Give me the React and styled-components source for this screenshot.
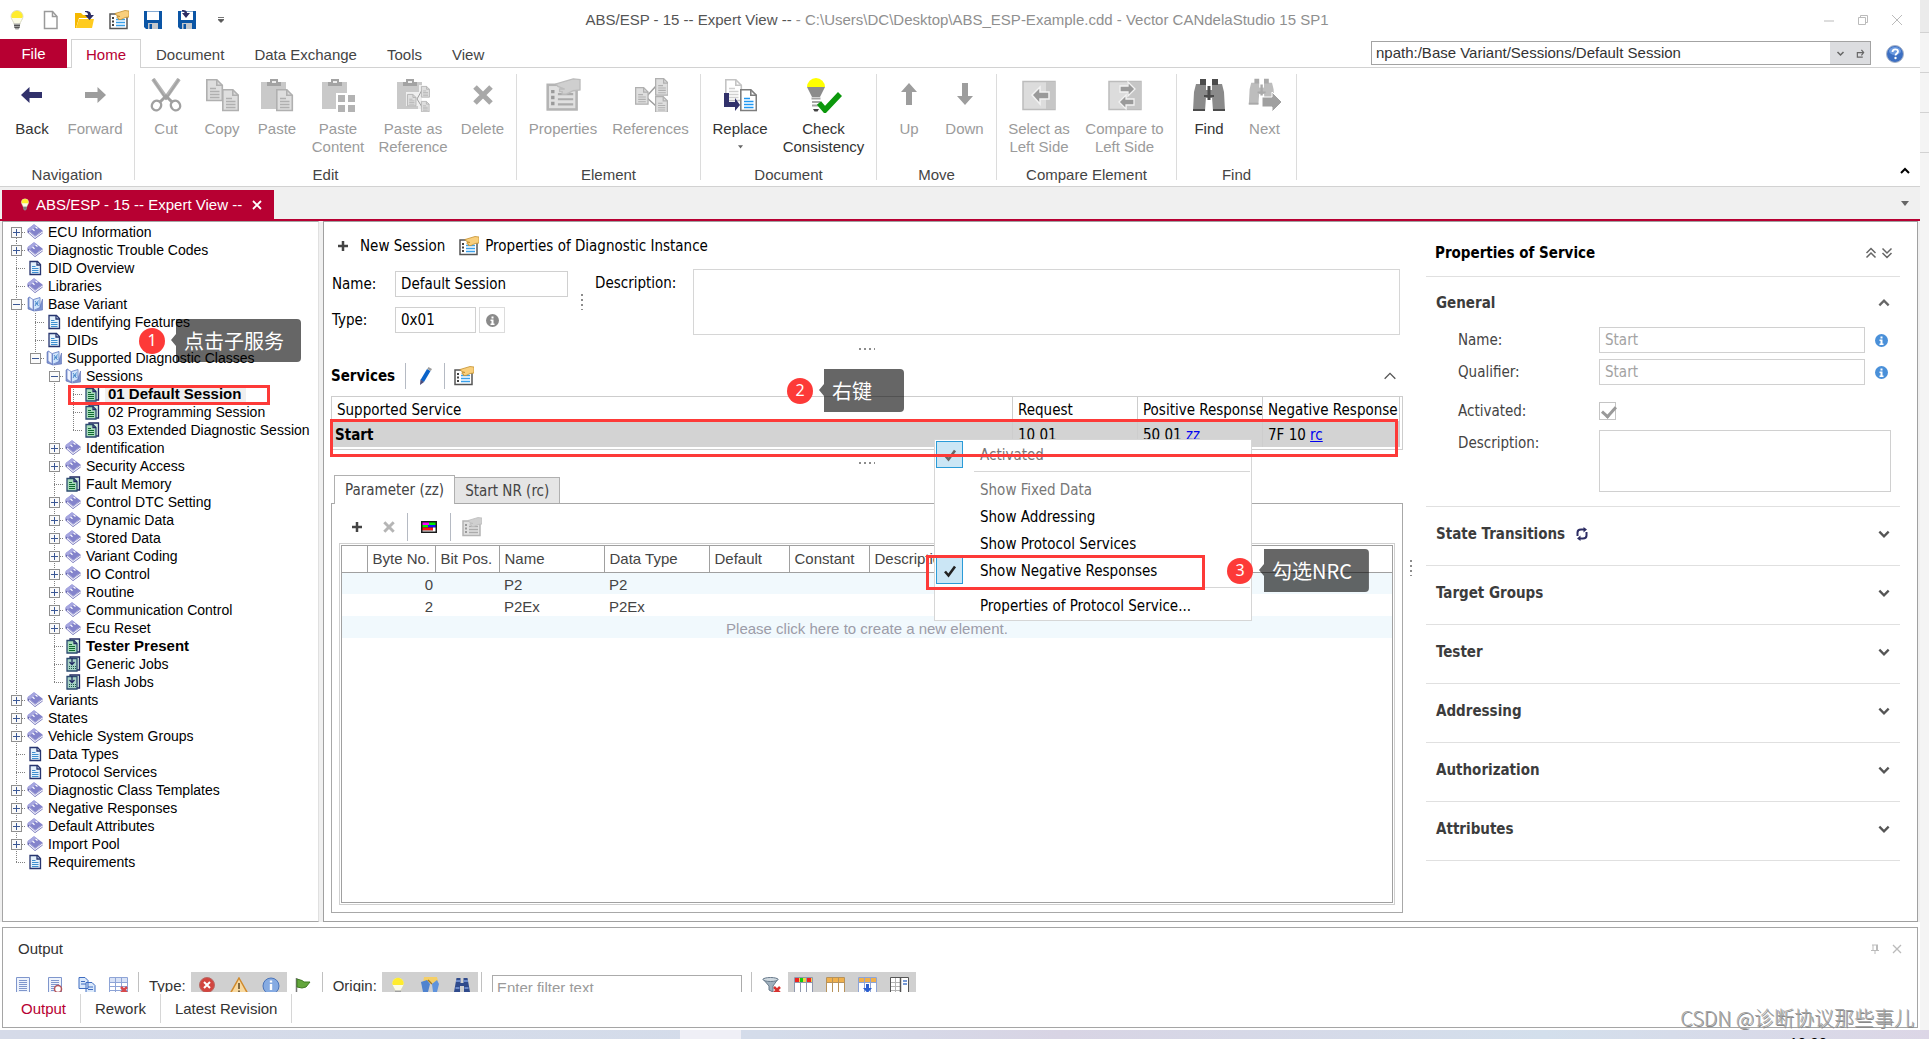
import { useState } from 'react'
import styled, { createGlobalStyle, css } from 'styled-components'

const UI_FONT = `'Liberation Sans', Arial, sans-serif`
const FORM_FONT = `'DejaVu Sans Condensed', 'Noto Sans', sans-serif`
const CJK_FONT = `'Noto Sans CJK SC', sans-serif`

/* ---------- icons ---------- */

const Svg = ({ w = 16, h = w, box, children }) => (
  <svg width={w} height={h} viewBox={box || `0 0 ${w} ${h}`} aria-hidden="true">
    {children}
  </svg>
)

const Bulb = ({ w = 20, h = 20 }) => (
  <Svg w={w} h={h} box="0 0 20 20">
    <path d="M4 6.500a6 6 0 0 1 12 0c0 3-3 5-3 8H7c0-3-3-5-3-8z" fill="#fbfbe6" stroke="#cfcfba" strokeWidth=".8" />
    <path d="M4.300 6.500a5.700 5.700 0 0 1 11.400 0l-.700 1.500H5z" fill="#ffec2e" />
    <path d="M7 13.500h6v3.500l-1.500 2.500h-3L7 17z" fill="#a0a0a0" />
    <path d="M7 15.500h6M7.500 17.500h5" stroke="#555" />
  </Svg>
)

const NewFile = () => (
  <Svg w={20}>
    <path d="M3.500 1.500h8l4.500 5v12H3.500z" fill="#fff" stroke="#9a9a9a" strokeWidth="1.500" />
    <path d="M11.500 1.500v5H16" fill="none" stroke="#9a9a9a" strokeWidth="1.500" />
  </Svg>
)

const OpenFile = () => (
  <Svg w={20}>
    <path d="M0 3h6l2 2h6v3H4L1 18H0z" fill="#f5b800" />
    <path d="M4 9h15l-2 9H1z" fill="#ffcb1f" />
    <path d="M10 1c5-.500 6 2 6 4h3l-4.500 5L10 5h3c0-2-1-3-3-3z" fill="#2c2c63" />
  </Svg>
)

const Props = ({ w = 20, h = 20, gray }) => (
  <Svg w={w} h={h} box="0 0 20 20">
    <rect x="1" y="4" width="17" height="14.500" fill={gray ? '#e0e0e0' : '#fff'} stroke={gray ? '#b4b4b4' : '#555'} strokeWidth="1.500" />
    <path d="M3 8h2M3 11.500h2M3 15h2" stroke={gray ? '#9a9a9a' : '#444'} strokeWidth="2" />
    <path d="M7 9.500h9M7 12.500h9M7 15.500h9" stroke={gray ? '#ababab' : '#39a0ea'} strokeWidth="1.300" />
    <path d="M6 3.500l5-1.500 5-1.500 4 .500v6l-4 .500-4 2H9.500V8H8V6.500h3L7 5z" fill={gray ? '#cfcfcf' : '#f9cf7c'} stroke={gray ? '#bcbcbc' : '#c4912f'} strokeWidth=".8" />
  </Svg>
)

const Save = ({ arrow }) => (
  <Svg w={20}>
    <path d="M1 1h18v18H3l-2-2z" fill="#0b55a5" />
    <rect x="4" y="1.500" width="12" height="8.500" fill="#fff" />
    <rect x="5" y="13" width="10" height="6" fill="#c4c7cb" />
    <rect x="6.500" y="14" width="2.500" height="5" fill="#0b55a5" />
    {arrow && <path d="M5 0c4 0 5 1 5 3h3L9 8 5 3h2.500c0-1-1-1.500-2.500-1.500z" fill="#2c2c63" />}
  </Svg>
)

const arrows = {
  left: 'M6 17l8.500-8v5H27v6H14.500v5z',
  right: 'M28 17l-8.500-8v5H7v6h12.500v5z',
  up: 'M17 5l8 9h-5v13h-6V14H9z',
  down: 'M17 27l8-9h-5V5h-6v13H9z',
}
const Arrow = ({ dir, color = '#9d9d9d' }) => (
  <Svg w={34}>
    <path d={arrows[dir]} fill={color} />
  </Svg>
)

const Cut = () => (
  <Svg w={34}>
    <path d="M4 1l14 20M30 1L16 21" stroke="#b5b5b5" strokeWidth="4" />
    <path d="M4 1l13 20M30 1L17 21" stroke="#a2a2a2" strokeWidth="1.500" />
    <ellipse cx="7.500" cy="27.500" rx="4.500" ry="5" transform="rotate(30 7.500 27.500)" fill="none" stroke="#a0a0a0" strokeWidth="2.400" />
    <ellipse cx="26.500" cy="27.500" rx="4.500" ry="5" transform="rotate(-30 26.500 27.500)" fill="none" stroke="#a0a0a0" strokeWidth="2.400" />
    <path d="M11 24l6-6 6 6" fill="none" stroke="#a0a0a0" strokeWidth="3" />
  </Svg>
)

const Page = ({ x, y, s = 1, fill = '#dedede', line = '#b0b0b0', text = '#b0b0b0' }) => (
  <g transform={`translate(${x} ${y}) scale(${s})`}>
    <path d="M.8.8h10l5.500 5.500V21.500H.8z" fill={fill} stroke={line} strokeWidth="1.600" />
    <path d="M10.800.8v5.500h5.500" fill="none" stroke={line} strokeWidth="1.600" />
    <path d="M4 9.500h6M4 12.500h9.500M4 15.500h9.500M4 18.500h9.500" stroke={text} strokeWidth="1.400" />
  </g>
)

const Copy = () => (
  <Svg w={34}>
    <Page x={1} y={1} />
    <Page x={17} y={11} />
  </Svg>
)

const Clip = () => (
  <>
    <path d="M1 4h25v27H1z" fill="#c9c9c9" />
    <path d="M7 8V4h3V1h8v3h3v4z" fill="#a3a3a3" />
    <path d="M12 3h4v2h-4z" fill="#eee" />
  </>
)
const Paste = () => (
  <Svg w={34}>
    <Clip />
    <Page x={16} y={11} />
  </Svg>
)
const PasteContent = () => (
  <Svg w={34}>
    <Clip />
    <path d="M15 15h19v19H15z" fill="#fff" />
    <path d="M17 17h7v7h-7zM27 17h7v7h-7zM17 27h7v7h-7zM27 27h7v7h-7z" fill="#b3b3b3" />
  </Svg>
)
const PasteRef = () => (
  <Svg w={34}>
    <Clip />
    <path d="M10 14h13V7h11v27H22v-6H10z" fill="#fff" opacity=".7" />
    <path d="M21 21l5-9M21 21l5 8" stroke="#9d9d9d" />
    <Page x={11} y={16} s={0.55} />
    <Page x={25} y={8} s={0.52} />
    <Page x={25} y={23} s={0.5} />
  </Svg>
)
const Refs = () => (
  <Svg w={34}>
    <path d="M12 19L22 8M12 19l10 9" stroke="#9d9d9d" strokeWidth="1.500" />
    <Page x={1} y={9} s={0.8} />
    <Page x={21} y={0} s={0.8} />
    <Page x={21} y={18} s={0.76} />
  </Svg>
)
const Cross = ({ w = 34, color = '#a8a8a8' }) => (
  <Svg w={w} box="0 0 34 34">
    <path d="M9 9l16 16M25 9L9 25" stroke={color} strokeWidth="5" />
  </Svg>
)
const Replace = () => (
  <Svg w={34}>
    <Page x={2} y={1} fill="#fff" line="#c4c4c4" text="#d0d0d0" />
    <Page x={17} y={11} fill="#fff" line="#7d7d7d" text="#1f97f2" />
    <path d="M1 15h5v9h6v-4l5 7-5 6v-4H1z" fill="#31316b" />
  </Svg>
)
const Check = () => (
  <Svg w={36} h={36}>
    <path d="M1 10a9 9 0 0 1 18 0z" fill="#ffff00" />
    <path d="M1 10h18l-5 10H6z" fill="#8c8c8c" />
    <path d="M5.500 21.500h9M6 25h8.500M6 28.500h8" stroke="#a5a5a5" strokeWidth="2" />
    <path d="M7 32h6l-1.500 2.500h-3z" fill="#444" />
    <path d="M13 26l6 7L34 17" fill="none" stroke="#0c980c" strokeWidth="5.500" />
  </Svg>
)
const LeftSide = () => (
  <Svg w={34}>
    <path d="M1 3.500h32v28H1z" fill="#dcdcdc" stroke="#bcbcbc" strokeWidth="1.500" />
    <path d="M24 4h9v27h-9z" fill="#c6c6c6" />
    <path d="M10 17l8-8v5h9v7h-9v5z" fill="#9a9a9a" stroke="#f2f2f2" strokeWidth="1.500" />
  </Svg>
)
const Compare = () => (
  <Svg w={34}>
    <path d="M1 3.500h32v28H1z" fill="#dcdcdc" stroke="#bcbcbc" strokeWidth="1.500" />
    <path d="M19 4h14v27H19z" fill="#c6c6c6" />
    <path d="M27 11l-7-7v4h-8v6h8v4zM11 24l7-7v4h8v6h-8v4z" fill="#9a9a9a" stroke="#f2f2f2" strokeWidth="1.300" />
  </Svg>
)
const Binoculars = ({ next }) => (
  <Svg w={34}>
    <g fill={next ? '#bdbdbd' : '#8a8a8a'} transform={next ? 'scale(.8)' : undefined}>
      <path d="M4 6h10v13l-1 14H1L2 14zM20 6h10l2 8 1 19H21l-1-14z" />
      <path d="M13 12h8v8h-8z" />
      <path d="M8 1h6v6H8zM20 1h6v6h-6zM1 31h12v2H1zM21 31h12v2H21zM15.500 8h3v14h-3zM12 17h10v2H12z" fill={next ? '#a9a9a9' : '#4b4b4b'} />
    </g>
    {next && <path d="M14 19h10v-5l10 10-10 10v-5H14z" fill="#a0a0a0" stroke="#fff" />}
  </Svg>
)

const Chevron = ({ down, w = 12, weight = 2, color = '#555' }) => (
  <Svg w={w} box="0 0 12 12">
    <path d={down ? 'M2 4l4 4 4-4' : 'M2 8l4-4 4 4'} fill="none" stroke={color} strokeWidth={weight} />
  </Svg>
)
const DoubleChevron = ({ down }) => (
  <Svg w={12}>
    <path d={down ? 'M1.500 1.500L6 6l4.500-4.500M1.500 6L6 10.500 10.500 6' : 'M1.500 6L6 1.500 10.500 6M1.500 10.500L6 6l4.500 4.500'} fill="none" stroke="#666" strokeWidth="1.500" />
  </Svg>
)
const Triangle = ({ w = 8, color = '#666' }) => (
  <Svg w={w} box="0 0 8 8">
    <path d="M0 2h8L4 7z" fill={color} />
  </Svg>
)
const Info = ({ w = 13, color = '#4a90d9' }) => (
  <Svg w={w} box="0 0 13 13">
    <circle cx="6.500" cy="6.500" r="6.500" fill={color} />
    <path d="M5.500 2.500h2v2h-2zM4.500 5.500h3v4h1V11h-4V9.500h1v-2.500h-1z" fill="#fff" />
  </Svg>
)
const Help = () => (
  <Svg w={18}>
    <circle cx="9" cy="9" r="8.500" fill="#3c6fc2" stroke="#a9b4c8" />
    <ellipse cx="9" cy="6" rx="6" ry="4" fill="#6d9be0" />
    <path d="M6.500 7c0-3.500 5.500-3.500 5.500-.500 0 2-2.500 2-2.500 4" fill="none" stroke="#fff" strokeWidth="1.800" />
    <circle cx="9.500" cy="13" r="1.200" fill="#fff" />
  </Svg>
)
const Plus = () => (
  <Svg w={12}>
    <path d="M6 1v10M1 6h10" stroke="#444" strokeWidth="2.500" />
  </Svg>
)
const Pencil = () => (
  <Svg w={18} h={20}>
    <path d="M11 3l3.500 2L8 16l-3.500-2z" fill="#0a63c9" />
    <path d="M12.500 1l3.500 2-1.200 2-3.500-2z" fill="#9c9c9c" />
    <path d="M4.500 13.500L8 16l-4 3z" fill="#4a4a7a" />
  </Svg>
)
const Blocks = () => (
  <Svg w={16} h={12}>
    <path d="M0 0h16v12H0z" fill="#1a1a1a" />
    <path d="M1.500 1.500H8V4H1.500z" fill="#f0f" />
    <path d="M8 1.500h6.500V4H8zM1.500 4H7v2.500H1.500z" fill="#0e0" />
    <path d="M7 4h7.500v2.500H7z" fill="#11f" />
    <path d="M1.500 6.500H12V9.500H1.500z" fill="#f11" />
    <path d="M12 6.500h2.500v4H12zM1.500 9.500H12v1H1.500z" fill="#fff" />
  </Svg>
)
const Tick = ({ color }) => (
  <Svg w={14}>
    <path d="M2 7.500l3.500 4L12 2.500" fill="none" stroke={color} strokeWidth="2.600" />
  </Svg>
)
const Cycle = () => (
  <Svg w={14}>
    <path d="M2.500 9V5.500c0-2 1.500-3 3.500-3h3M11.500 5v3.500c0 2-1.500 3-3.500 3H5" fill="none" stroke="#2c2c63" strokeWidth="2" />
    <path d="M8.500 0l3.500 2.500-3.500 3zM5.500 8.500L2 11.500l3.500 2.500z" fill="#2c2c63" />
  </Svg>
)

const treeIcons = {
  book: (
    <Svg w={16}>
      <path d="M.500 5.500v3L8 15l7.500-5.500v-3L8 12.500z" fill="#6464b2" />
      <path d="M2 8.200l6 5.300 7.500-5.500" fill="none" stroke="#f1f1fb" strokeWidth="1.200" />
      <path d="M.500 5.200L7 .300 15.500 6.500 8 12.300z" fill="#8383cb" />
      <path d="M.500 5.200L7 .300l2.500 1.800L3 7.500z" fill="#a6a6e0" />
      <path d="M5.500 5l2 1.700M8.500 3l2 1.500" stroke="#fff" strokeWidth="1.200" />
    </Svg>
  ),
  open: (
    <Svg w={16}>
      <path d="M1 2l2-1v11l4 3-6-2zM15.500 3v11l-8 1 5-3z" fill="#7d93cf" stroke="#5d6fb5" strokeWidth=".6" />
      <path d="M2 1l4 2.500V14l-4-3z" fill="#f2f6ff" stroke="#7288c8" strokeWidth=".8" />
      <path d="M6.500 3.500L13 1.500v10l-6.500 3z" fill="#cfe4fb" stroke="#5a76c0" strokeWidth=".8" />
      <path d="M8 5l3.500 5M11.500 4.500L8 10M8 8l3.500-1" stroke="#3f82c6" strokeWidth=".9" />
    </Svg>
  ),
  page: (
    <Svg w={16}>
      <path d="M3 1.500h7.500l3 3v10H3z" fill="#e3f1fc" stroke="#27356f" strokeWidth="1.300" />
      <path d="M10 1.500v3.500h3.500" fill="none" stroke="#27356f" strokeWidth="1.300" />
      <path d="M5 6.500h3.500M5 8.500h6.500M5 10.500h6.500M5 12.500h6.500" stroke="#3f8fd0" />
    </Svg>
  ),
  green: (
    <Svg w={16}>
      <path d="M5 1h9.500v13H5z" fill="#d7efe2" stroke="#232a63" strokeWidth="1.300" />
      <path d="M2 2.500h7l3 3v9.500H2z" fill="#a8dcbb" stroke="#2b4a70" strokeWidth="1.300" />
      <path d="M9 2.500v3h3" fill="none" stroke="#232a63" strokeWidth="1.300" />
      <path d="M4 6.500h3M4 8.500h6M4 10.500h6M4 12.500h6" stroke="#0f6b30" />
    </Svg>
  ),
  job: (
    <Svg w={16}>
      <path d="M5 1h9.500v13H5z" fill="#d7efe2" stroke="#232a63" strokeWidth="1.300" />
      <path d="M2 2.500h10v12.500H2z" fill="#a8d3c6" stroke="#2b4a70" strokeWidth="1.300" />
      <path d="M7 2v6M4.500 6L7 8.500 9.500 6" fill="none" stroke="#232a63" strokeWidth="1.300" />
      <path d="M4 10.500h7M4 12.500h7" stroke="#1d5a4c" strokeDasharray="1 1" />
    </Svg>
  ),
}

/* ---------- output toolbar icons ---------- */

const ListIcon = ({ mark }) => (
  <Svg w={16}>
    <path d="M1.500.500h13v16h-13z" fill="#eef3fc" stroke="#7f96cc" />
    <path d="M4 3.500h8M4 5.500h8M4 7.500h8M4 9.500h8M4 11.500h8M4 13.500h8" stroke="#7f96cc" />
    {mark && <circle cx="11" cy="12" r="3.500" fill="#fff" stroke="#b4555c" strokeWidth="1.500" />}
  </Svg>
)
const CopyIcon = () => (
  <Svg w={18} h={16}>
    <path d="M1 .500h6l3 3v8H1zM8 5.500h6l3 3V16H8z" fill="#dbe9fb" stroke="#3f6cc0" />
    <path d="M3 4.500h4M3 7h5M10 10h5M10 12.500h5" stroke="#3f6cc0" />
  </Svg>
)
const GridIcon = ({ head = '#d8e2f6', line = '#8ea4d6', mark }) => (
  <Svg w={20} h={18}>
    <path d="M.500.500h18v17H.500z" fill="#fff" stroke={line} />
    <path d="M1 1h17v4H1z" fill={head} />
    <path d="M.500 5.500h18M6.500 1v16M12.500 1v16" stroke={line} />
    {mark === 'x' && <path d="M.500 9.500h18M.500 13.500h18" stroke={line} />}
    {mark === 'x' && <path d="M12 10l6 6M18 10l-6 6" stroke="#d8484a" strokeWidth="2.500" />}
    {mark === 'colors' && <path d="M1 3h4M13 3h4" stroke="#e22" strokeWidth="4" />}
    {mark === 'colors' && <path d="M6 3h3" stroke="#1c1" strokeWidth="4" />}
    {mark === 'down' && <path d="M8 7h3v4h3l-4.500 5L5 11h3z" fill="#2b5fd0" />}
  </Svg>
)
const SplitIcon = () => (
  <Svg w={20} h={18}>
    <path d="M.500.500h18v17H.500z" fill="#fff" stroke="#555" />
    <path d="M1 5.500h9M1 9.500h9M1 13.500h9M5.500 1v16" stroke="#b5b5b5" />
    <path d="M10.500.500v17" stroke="#555" strokeWidth="1.500" />
    <path d="M13 4h4M13 7h4" stroke="#4a78c8" strokeWidth="1.500" />
  </Svg>
)
const ErrorIcon = () => (
  <Svg w={16}>
    <circle cx="8" cy="8" r="7.500" fill="#d2453f" stroke="#b86a66" />
    <path d="M5 5l6 6M11 5l-6 6" stroke="#fff" strokeWidth="2" />
  </Svg>
)
const WarnIcon = () => (
  <Svg w={20} h={18}>
    <path d="M10 1l9 16H1z" fill="#f8d9a0" stroke="#d08a2c" strokeWidth="1.500" />
    <path d="M10 6v6M10 13.500v2" stroke="#5b4420" strokeWidth="1.500" />
  </Svg>
)
const NoteIcon = () => (
  <Svg w={18}>
    <circle cx="9" cy="9" r="8" fill="#86abe2" stroke="#4a74ba" />
    <path d="M9 3.500v2M9 7v6" stroke="#fff" strokeWidth="2.400" />
  </Svg>
)
const FlagIcon = () => (
  <Svg w={16}>
    <path d="M1.500 1v15" stroke="#777" strokeWidth="1.500" />
    <path d="M2 2l5 1.500L9 5l6 0-4 5-4 1-5-1z" fill="#63a63c" stroke="#3f7a22" />
  </Svg>
)
const PeopleIcon = () => (
  <Svg w={20} h={16}>
    <path d="M4 0h13l1 4-5 2-4-2-6 2z" fill="#f5cf66" />
    <path d="M1 5l6-2 3 4-2 8H3z" fill="#4f83cf" />
    <path d="M12 7l5-4 2 4-2 8h-4z" fill="#5f93dc" />
    <path d="M8 3l4 4" stroke="#a87a14" strokeWidth="1.500" />
  </Svg>
)
const FindIcon = () => (
  <Svg w={18} h={16}>
    <path d="M3.500 1h4v5h3V1h4L17 15h-6V9H7v6H1z" fill="#2f4a8c" />
    <path d="M3 4h4.500M10.500 4H15M2.500 11h4M11.500 11h4" stroke="#7f9ede" strokeWidth="1.500" />
  </Svg>
)
const FunnelIcon = () => (
  <Svg w={20} h={18}>
    <path d="M1 2h15l-5 7v6l-4-2V9z" fill="#9fb0bd" stroke="#67798a" />
    <ellipse cx="8.500" cy="2.500" rx="7.500" ry="2" fill="#cfd9e0" stroke="#67798a" />
    <path d="M12 10l6 6M18 10l-6 6" stroke="#d8322f" strokeWidth="2.500" />
  </Svg>
)

/* ---------- data ---------- */

const ribbon = [
  { name: 'Navigation', items: [
    { label: 'Back', w: 56, icon: <Arrow dir="left" color="#31316b" />, on: true },
    { label: 'Forward', w: 70, icon: <Arrow dir="right" /> },
  ] },
  { name: 'Edit', items: [
    { label: 'Cut', w: 54, icon: <Cut /> },
    { label: 'Copy', w: 58, icon: <Copy /> },
    { label: 'Paste', w: 52, icon: <Paste /> },
    { label: 'Paste Content', w: 70, icon: <PasteContent /> },
    { label: 'Paste as Reference', w: 80, icon: <PasteRef /> },
    { label: 'Delete', w: 59, icon: <Cross /> },
  ] },
  { name: 'Element', items: [
    { label: 'Properties', w: 84, icon: <Props w={36} h={34} gray /> },
    { label: 'References', w: 91, icon: <Refs /> },
  ] },
  { name: 'Document', items: [
    { label: 'Replace', w: 70, icon: <Replace />, on: true, menu: true },
    { label: 'Check Consistency', w: 97, icon: <Check />, on: true },
  ] },
  { name: 'Move', items: [
    { label: 'Up', w: 56, icon: <Arrow dir="up" /> },
    { label: 'Down', w: 55, icon: <Arrow dir="down" /> },
  ] },
  { name: 'Compare Element', items: [
    { label: 'Select as Left Side', w: 76, icon: <LeftSide /> },
    { label: 'Compare to Left Side', w: 95, icon: <Compare /> },
  ] },
  { name: 'Find', items: [
    { label: 'Find', w: 56, icon: <Binoculars />, on: true },
    { label: 'Next', w: 55, icon: <Binoculars next /> },
  ] },
]

const book = (label) => ({ label, icon: 'book', box: '+' })
const page = (label) => ({ label, icon: 'page' })

const tree = [
  book('ECU Information'),
  book('Diagnostic Trouble Codes'),
  page('DID Overview'),
  { label: 'Libraries', icon: 'book' },
  { label: 'Base Variant', icon: 'open', box: '-', children: [
    page('Identifying Features'),
    page('DIDs'),
    { label: 'Supported Diagnostic Classes', icon: 'open', box: '-', children: [
      { label: 'Sessions', icon: 'open', box: '-', children: [
        { label: '01 Default Session', icon: 'green', inset: true, selected: true },
        { label: '02 Programming Session', icon: 'green', inset: true },
        { label: '03 Extended Diagnostic Session', icon: 'green', inset: true },
      ] },
      book('Identification'),
      book('Security Access'),
      { label: 'Fault Memory', icon: 'green' },
      book('Control DTC Setting'),
      book('Dynamic Data'),
      book('Stored Data'),
      book('Variant Coding'),
      book('IO Control'),
      book('Routine'),
      book('Communication Control'),
      book('Ecu Reset'),
      { label: 'Tester Present', icon: 'green', bold: true },
      { label: 'Generic Jobs', icon: 'job' },
      { label: 'Flash Jobs', icon: 'job' },
    ] },
  ] },
  book('Variants'),
  book('States'),
  book('Vehicle System Groups'),
  page('Data Types'),
  page('Protocol Services'),
  book('Diagnostic Class Templates'),
  book('Negative Responses'),
  book('Default Attributes'),
  book('Import Pool'),
  page('Requirements'),
]

const sections = ['State Transitions', 'Target Groups', 'Tester', 'Addressing', 'Authorization', 'Attributes']
const gridColumns = [
  ['', 25],
  ['Byte No.', 68],
  ['Bit Pos.', 64],
  ['Name', 105],
  ['Data Type', 105],
  ['Default', 80],
  ['Constant', 80],
  ['Description', null],
]

/* ---------- components ---------- */

const TreeNode = ({ node, guides = [], last }) => (
  <>
    <TreeRow role="treeitem" aria-selected={!!node.selected}>
      {guides.map((line, idx) => (
        <Guide key={idx} $line={line} />
      ))}
      <Branch $last={last} $first={node.label === 'ECU Information'}>
        {node.box && <Expander aria-label={`Toggle ${node.label}`} $minus={node.box === '-'} />}
      </Branch>
      {treeIcons[node.icon]}
      <TreeLabel $inset={node.inset} $bold={node.bold || node.selected} $selected={node.selected}>
        {node.label}
      </TreeLabel>
    </TreeRow>
    {node.children?.map((child, idx) => (
      <TreeNode key={child.label} node={child} guides={[...guides, !last]} last={idx === node.children.length - 1} />
    ))}
  </>
)

const Callout = ({ number, children, x, y, wide }) => (
  <CalloutWrapper $x={x} $y={y}>
    <Badge>{number}</Badge>
    <Bubble $wide={wide}>{children}</Bubble>
  </CalloutWrapper>
)

const Ribbon = () => (
  <RibbonBar>
    {ribbon.map((group) => (
      <RibbonGroup key={group.name}>
        <GroupItems>
          {group.items.map((item) => (
            <RibbonButton key={item.label} $w={item.w} $on={item.on}>
              <RibbonIcon>{item.icon}</RibbonIcon>
              <span>{item.label}</span>
              {item.menu && <Triangle w={5} />}
            </RibbonButton>
          ))}
        </GroupItems>
        <GroupName>{group.name}</GroupName>
      </RibbonGroup>
    ))}
    <Collapse aria-label="Collapse ribbon">
      <Chevron color="#000" weight={2} w={12} />
    </Collapse>
  </RibbonBar>
)

const ContextMenu = () => (
  <Menu role="menu">
    <MenuItem $dim><MenuCheck $on><Tick color="#666" /></MenuCheck>Activated</MenuItem>
    <MenuLine />
    <MenuItem $dim><MenuCheck />Show Fixed Data</MenuItem>
    <MenuItem><MenuCheck />Show Addressing</MenuItem>
    <MenuItem><MenuCheck />Show Protocol Services</MenuItem>
    <MenuItem><MenuCheck $on><Tick color="#222" /></MenuCheck>Show Negative Responses</MenuItem>
    <MenuLine />
    <MenuItem><MenuCheck />Properties of Protocol Service...</MenuItem>
  </Menu>
)

const Services = () => (
  <ServicesArea>
    <ServiceTable>
      <colgroup>
        <col />
        <col width="125" />
        <col width="125" />
        <col width="137" />
      </colgroup>
      <thead>
        <tr>
          <th>Supported Service</th>
          <th>Request</th>
          <th>Positive Response</th>
          <th>Negative Response</th>
        </tr>
      </thead>
      <tbody>
        <tr>
          <td><b>Start</b></td>
          <td>10 01</td>
          <td>50 01 <a href="#zz">zz</a></td>
          <td>7F 10 <a href="#rc">rc</a></td>
        </tr>
      </tbody>
    </ServiceTable>
    <ContextMenu />
    <RowMark />
    <MenuMark />
    <Callout number="2" x={455} y={-28} wide>右键</Callout>
    <Callout number="3" x={895} y={152}>勾选NRC</Callout>
  </ServicesArea>
)

const ParameterGrid = () => (
  <GridFrame>
    <GridInner>
      <ParamTable>
        <colgroup>
          {gridColumns.map(([name, width]) => (
            <col key={name} width={width || undefined} />
          ))}
        </colgroup>
        <thead>
          <tr>
            {gridColumns.map(([name]) => (
              <th key={name}>{name}</th>
            ))}
          </tr>
        </thead>
        <tbody>
          <tr><td /><Num>0</Num><td /><td>P2</td><td>P2</td><td colSpan="3" /></tr>
          <tr><td /><Num>2</Num><td /><td>P2Ex</td><td>P2Ex</td><td colSpan="3" /></tr>
          <tr><Hint colSpan="8">Please click here to create a new element.</Hint></tr>
        </tbody>
      </ParamTable>
    </GridInner>
  </GridFrame>
)

const Editor = () => {
  const [name, setName] = useState('Default Session')
  const [type, setType] = useState('0x01')

  return (
    <EditorColumn>
      <InstanceBar>
        <PlainButton $gap={11}><Plus />New Session</PlainButton>
        <PlainButton $gap={6}><Props />Properties of Diagnostic Instance</PlainButton>
      </InstanceBar>
      <InstanceForm>
        <FormFields>
          <label htmlFor="name">Name:</label>
          <TextBox id="name" value={name} onChange={(e) => setName(e.target.value)} />
          <label htmlFor="type">Type:</label>
          <FieldPair>
            <TextBox id="type" value={type} onChange={(e) => setType(e.target.value)} />
            <InfoButton aria-label="Info"><Info color="#8a8a8a" /></InfoButton>
          </FieldPair>
        </FormFields>
        <DotsColumn><Dots $vertical /></DotsColumn>
        <DescriptionLabel htmlFor="description">Description:</DescriptionLabel>
        <DescriptionBox id="description" />
      </InstanceForm>
      <DotsRow $h={28}><Dots /></DotsRow>
      <ServicesBar>
        <h2>Services</h2>
        <BarLine />
        <IconButton aria-label="Edit"><Pencil /></IconButton>
        <BarLine />
        <IconButton aria-label="Properties"><Props /></IconButton>
        <Spacer />
        <CollapseButton aria-label="Collapse"><Chevron w={16} weight={1} /></CollapseButton>
      </ServicesBar>
      <Services />
      <DotsRow $h={25}><Dots /></DotsRow>
      <ParamTabs role="tablist">
        <ParamTab role="tab" $active>Parameter (zz)</ParamTab>
        <ParamTab role="tab">Start NR (rc)</ParamTab>
      </ParamTabs>
      <ParamPanel>
        <ParamBar>
          <IconButton aria-label="Add"><Plus /></IconButton>
          <IconButton aria-label="Remove"><Cross w={20} color="#b5b5b5" /></IconButton>
          <BarLine />
          <IconButton aria-label="Colors"><Blocks /></IconButton>
          <BarLine />
          <IconButton aria-label="Properties"><Props gray /></IconButton>
        </ParamBar>
        <ParameterGrid />
      </ParamPanel>
    </EditorColumn>
  )
}

const ServiceProperties = () => (
  <Aside>
    <AsideTitle>
      <h2>Properties of Service</h2>
      <button aria-label="Collapse all"><DoubleChevron /></button>
      <button aria-label="Expand all"><DoubleChevron down /></button>
    </AsideTitle>
    <General>
      <SectionHead $open>General<Chevron w={14} color="#666" /></SectionHead>
      <PropRow>
        <label htmlFor="svc-name">Name:</label>
        <TextBox id="svc-name" defaultValue="Start" disabled />
        <Info />
      </PropRow>
      <PropRow>
        <label htmlFor="svc-qualifier">Qualifier:</label>
        <TextBox id="svc-qualifier" defaultValue="Start" disabled />
        <Info />
      </PropRow>
      <PropRow>
        <label htmlFor="svc-active">Activated:</label>
        <CheckBox id="svc-active" type="checkbox" defaultChecked disabled />
      </PropRow>
      <PropRow $top>
        <label htmlFor="svc-description">Description:</label>
        <PropArea id="svc-description" disabled />
      </PropRow>
    </General>
    {sections.map((section) => (
      <SectionHead key={section}>
        {section}
        {section === 'State Transitions' && <Cycle />}
        <Chevron down w={14} color="#555" />
      </SectionHead>
    ))}
  </Aside>
)

const Output = () => (
  <OutputPane>
    <OutputTitle>
      Output
      <Spacer />
      <IconButton aria-label="Pin">
        <Svg w={10}><path d="M2 1h6M3 1v5M6.500 1v5M7.500 1v5M1 6.500h8M5 6v4" stroke="#bbb" fill="none" /></Svg>
      </IconButton>
      <IconButton aria-label="Close">
        <Svg w={10}><path d="M1 1l8 8M9 1L1 9" stroke="#bbb" strokeWidth="1.300" /></Svg>
      </IconButton>
    </OutputTitle>
    <OutputBar>
      <ToolGroup>
        <button aria-label="List"><ListIcon /></button>
        <button aria-label="Clear"><ListIcon mark /></button>
        <button aria-label="Copy"><CopyIcon /></button>
        <button aria-label="Delete table"><GridIcon mark="x" /></button>
      </ToolGroup>
      <ToolLine />
      <ToolText>Type:</ToolText>
      <ToolGroup $pressed>
        <button aria-label="Errors"><ErrorIcon /></button>
        <button aria-label="Warnings"><WarnIcon /></button>
        <button aria-label="Notes"><NoteIcon /></button>
      </ToolGroup>
      <ToolGroup>
        <button aria-label="Flags"><FlagIcon /></button>
      </ToolGroup>
      <ToolLine />
      <ToolText>Origin:</ToolText>
      <ToolGroup $pressed>
        <button aria-label="Hints"><Bulb w={20} h={20} /></button>
        <button aria-label="Users"><PeopleIcon /></button>
        <button aria-label="Search"><FindIcon /></button>
      </ToolGroup>
      <ToolLine />
      <FilterBox aria-label="Filter" placeholder="Enter filter text" />
      <ToolLine />
      <ToolGroup>
        <button aria-label="Clear filter"><FunnelIcon /></button>
      </ToolGroup>
      <ToolGroup $pressed>
        <button aria-label="Color columns"><GridIcon head="#f3d34a" line="#8f98ad" mark="colors" /></button>
        <button aria-label="Columns"><GridIcon head="#f0b04c" line="#b7925a" /></button>
        <button aria-label="Scroll"><GridIcon head="#f0b04c" line="#8ea4d6" mark="down" /></button>
        <button aria-label="Split"><SplitIcon /></button>
      </ToolGroup>
    </OutputBar>
    <OutputTabs role="tablist">
      <OutputTab role="tab" $active>Output</OutputTab>
      <OutputTab role="tab">Rework</OutputTab>
      <OutputTab role="tab">Latest Revision</OutputTab>
    </OutputTabs>
    <Watermark>CSDN @诊断协议那些事儿</Watermark>
  </OutputPane>
)

const App = () => (
  <>
    <GlobalStyle />
    <Screen>
      <Window>
        <TitleBar>
          <QuickButton aria-label="Start"><Bulb /></QuickButton>
          <QuickButton aria-label="New"><NewFile /></QuickButton>
          <QuickButton aria-label="Open"><OpenFile /></QuickButton>
          <QuickButton aria-label="Properties"><Props /></QuickButton>
          <QuickButton aria-label="Save"><Save /></QuickButton>
          <QuickButton aria-label="Save as"><Save arrow /></QuickButton>
          <QuickButton aria-label="Customize">
            <Svg w={6}><path d="M0 .500h6M0 2.500h6L3 5.500z" stroke="#555" strokeWidth=".8" fill="#555" /></Svg>
          </QuickButton>
          <Title>
            ABS/ESP - 15 -- Expert View -- <span>- C:\Users\DC\Desktop\ABS_ESP-Example.cdd - Vector CANdelaStudio 15 SP1</span>
          </Title>
          <QuickButton aria-label="Minimize"><Svg w={10}><path d="M0 6h10" stroke="#bbb" /></Svg></QuickButton>
          <QuickButton aria-label="Restore">
            <Svg w={10}><path d="M.500 2.500h7v7h-7zM2.500 2.500v-2h7v7h-2" fill="none" stroke="#bbb" /></Svg>
          </QuickButton>
          <QuickButton aria-label="Close"><Svg w={10}><path d="M0 0l10 10M10 0L0 10" stroke="#bbb" /></Svg></QuickButton>
        </TitleBar>
        <RibbonTabs>
          <FileTab>File</FileTab>
          <RibbonTab $active>Home</RibbonTab>
          <RibbonTab>Document</RibbonTab>
          <RibbonTab>Data Exchange</RibbonTab>
          <RibbonTab>Tools</RibbonTab>
          <RibbonTab>View</RibbonTab>
          <Spacer />
          <PathBox>
            <input aria-label="Path" defaultValue="npath:/Base Variant/Sessions/Default Session" />
            <button aria-label="History"><Chevron down w={9} color="#666" /></button>
            <button aria-label="Go">
              <Svg w={9} box="0 0 10 10"><path d="M7.500 9h-6V4h6M6 1l2.500 3L6 7" fill="none" stroke="#666" strokeWidth="1.300" /></Svg>
            </button>
          </PathBox>
          <HelpButton aria-label="Help"><Help /></HelpButton>
        </RibbonTabs>
        <Ribbon />
        <DocStrip>
          <DocTab>
            <Bulb w={12} h={15} />
            ABS/ESP - 15 -- Expert View --
            <button aria-label="Close tab"><Svg w={10}><path d="M1 1l8 8M9 1L1 9" stroke="#fff" strokeWidth="1.800" /></Svg></button>
          </DocTab>
          <DocMenu aria-label="Open documents"><Triangle /></DocMenu>
        </DocStrip>
        <Workspace>
          <TreePane role="tree">
            {tree.map((node, idx) => (
              <TreeNode key={node.label} node={node} last={idx === tree.length - 1} />
            ))}
            <SessionMark />
            <Callout number="1" x={136} y={97}>点击子服务</Callout>
          </TreePane>
          <EditorPane>
            <Editor />
            <SideSplit><Dots $vertical /></SideSplit>
            <ServiceProperties />
          </EditorPane>
        </Workspace>
        <Output />
      </Window>
      <Backdrop><i /><i /><i /><i /></Backdrop>
      <Taskbar>
        <TaskSlot />
        <Clock>10:00</Clock>
      </Taskbar>
    </Screen>
  </>
)

export default App

/* ---------- styles ---------- */

const GlobalStyle = createGlobalStyle`
  * {
    box-sizing: border-box;
  }

  body {
    margin: 0;
    background: #fff;
    color: #000;
    font: 15px/18px ${UI_FONT};
  }

  button, input, textarea {
    margin: 0;
    padding: 0;
    border: 0;
    border-radius: 0;
    background: none;
    color: inherit;
    font: inherit;
    outline: 0;
  }

  h2 {
    margin: 0;
    font-size: inherit;
  }

  svg {
    display: block;
    flex: none;
  }
`

const center = css`
  display: flex;
  align-items: center;
  justify-content: center;
`

const Screen = styled.div`
  display: grid;
  grid-template: 1fr 9px / 1fr 9px;
  height: 100vh;
  min-height: 960px;
  overflow: hidden;
`

const Window = styled.main`
  display: flex;
  flex-direction: column;
  min-width: 0;
  padding-bottom: 2px;
`

const Backdrop = styled.div`
  display: flex;
  flex-direction: column;
  background: #f4f4f4;

  i {
    height: 40px;
    border-bottom: 1px solid #d2d2d2;
  }

  i:first-child {
    height: 33px;
    background: #ebebeb;
  }
`

const Taskbar = styled.footer`
  grid-column: 1 / -1;
  display: flex;
  justify-content: space-between;
  background: linear-gradient(90deg, #d5dae8, #d4dcea 40%, #d8d4e4 55%, #d3dfec 80%, #dcd6e6);
  overflow: hidden;
`

const TaskSlot = styled.div`
  width: 61px;
  margin-left: 680px;
  background: #efeff6;
`

const Clock = styled.time`
  margin-right: 102px;
  padding-top: 4px;
`

const Spacer = styled.div`
  flex: 1;
`

const TitleBar = styled.header`
  display: flex;
  align-items: center;
  height: 39px;
  padding-right: 6px;
`

const QuickButton = styled.button`
  ${center}
  width: 34px;
  height: 38px;
`

const Title = styled.h1`
  flex: 1;
  margin: 0;
  padding-right: 136px;
  color: #555;
  font-size: 15px;
  font-weight: 400;
  text-align: center;

  span {
    color: #8f8f8f;
  }
`

const RibbonTabs = styled.nav`
  display: flex;
  height: 29px;
  padding-right: 16px;
  box-shadow: inset 0 -1px #d2d2d2;
`

const RibbonTab = styled.button`
  padding: 2px 14px 0;
  border: 1px solid transparent;
  border-bottom: 0;
  color: #444;

  ${({ $active }) =>
    $active &&
    css`
      border-color: #d2d2d2;
      background: #fff;
      color: #b70032;
    `}
`

const FileTab = styled.button`
  width: 67px;
  margin-right: 4px;
  background: #b70032;
  color: #fff;
`

const PathBox = styled.div`
  display: flex;
  width: 500px;
  height: 24px;
  margin-top: 2px;
  border: 1px solid #a3a3a3;
  background: #dcdde0;

  input {
    flex: 1;
    padding-left: 4px;
    background: #fff;
    color: #333;
  }

  button {
    ${center}
    width: 20px;
  }
`

const HelpButton = styled.button`
  margin-left: 15px;
`

const RibbonBar = styled.div`
  display: flex;
  height: 119px;
  border-bottom: 1px solid #d2d2d2;
`

const RibbonGroup = styled.section`
  display: flex;
  flex-direction: column;
  padding: 10px 5px 0 4px;
  background: linear-gradient(#dcdcdc, #dcdcdc) right 6px / 1px 106px no-repeat;
`

const GroupItems = styled.div`
  display: flex;
  flex: 1;
  align-items: flex-start;
`

const RibbonButton = styled.button`
  display: flex;
  flex-direction: column;
  align-items: center;
  width: ${({ $w }) => $w}px;
  color: ${({ $on }) => ($on ? '#333' : '#9b9b9b')};
  line-height: 18px;

  > svg {
    margin-top: 6px;
  }
`

const RibbonIcon = styled.span`
  ${center}
  height: 34px;
  margin-bottom: 8px;
`

const GroupName = styled.div`
  padding-bottom: 2px;
  color: #444;
  line-height: 18px;
  text-align: center;
`

const Collapse = styled.button`
  align-self: flex-end;
  margin: 0 9px 9px auto;
`

const DocStrip = styled.div`
  display: flex;
  flex: none;
  align-items: flex-end;
  height: 34px;
  padding: 0 11px 0 2px;
  border-bottom: 2px solid #b70032;
  background: #f0f0f0;
`

const DocTab = styled.div`
  display: flex;
  align-items: center;
  gap: 5px;
  width: 272px;
  height: 29px;
  padding-left: 17px;
  background: #b70032;
  color: #fff;

  button {
    margin-left: 5px;
  }
`

const DocMenu = styled.button`
  margin: 0 0 12px auto;
`

const Workspace = styled.div`
  display: flex;
  flex: 1;
  gap: 4px;
  min-height: 0;
  padding: 0 2px;
  background: #f0f0f0;
`

const TreePane = styled.div`
  position: relative;
  width: 317px;
  padding: 1px 0 0 4px;
  border: 1px solid #a5a5a5;
  border-right-color: #e0e0e0;
  background: #fff;
  font-size: 14px;
`

const TreeRow = styled.div`
  display: flex;
  align-items: center;
  height: 18px;
  white-space: nowrap;

  > svg {
    margin-left: 1px;
  }
`

const dotted = (deg) => `repeating-linear-gradient(${deg}deg, #808080 0 1px, transparent 1px 2px)`

const Guide = styled.span`
  width: 19px;
  height: 18px;
  background: ${({ $line }) => ($line ? `${dotted(180)} 9px 0 / 1px 18px no-repeat` : 'none')};
`

const Branch = styled.span`
  ${center}
  width: 19px;
  height: 18px;
  background: ${({ $last, $first }) =>
    `${dotted(180)} 9px ${$first ? 9 : 0}px / 1px ${$last ? 10 : 18}px no-repeat, ${dotted(90)} 9px 9px / 10px 1px no-repeat`};
`

const Expander = styled.button`
  width: 11px;
  height: 11px;
  border: 1px solid #8f8f8f;
  background: linear-gradient(#3a5795, #3a5795) center / 7px 1px no-repeat,
    linear-gradient(#3a5795, #3a5795) center / 1px ${({ $minus }) => ($minus ? 0 : 7)}px no-repeat, #fafafa;
`

const TreeLabel = styled.span`
  margin-left: 5px;
  padding: ${({ $inset }) => ($inset ? '0 5px 0 3px' : '0')};
  background: ${({ $selected }) => ($selected ? '#efefef' : 'none')};
  font-size: ${({ $bold }) => ($bold ? 15 : 14)}px;
  font-weight: ${({ $bold }) => ($bold ? 700 : 400)};
`

const EditorPane = styled.div`
  display: flex;
  flex: 1;
  min-width: 0;
  padding: 0 17px 8px 7px;
  border: 1px solid #a0a0a0;
  background: #fff;
  font-family: ${FORM_FONT};
`

const EditorColumn = styled.div`
  display: flex;
  flex: 1;
  flex-direction: column;
  min-width: 0;
`

const SideSplit = styled.div`
  ${center}
  width: 23px;
  padding-right: 7px;
`

const Dots = styled.div`
  width: ${({ $vertical }) => ($vertical ? 2 : 16)}px;
  height: ${({ $vertical }) => ($vertical ? 16 : 2)}px;
  background: ${({ $vertical }) =>
    `repeating-linear-gradient(${$vertical ? 180 : 90}deg, #8c8c8c 0 2px, transparent 2px 5px)`};
`

const DotsRow = styled.div`
  ${center}
  flex: none;
  height: ${({ $h }) => $h}px;
`

const DotsColumn = styled.div`
  ${center}
  width: 27px;
`

const InstanceBar = styled.div`
  display: flex;
  gap: 14px;
  height: 47px;
  padding-left: 6px;
`

const PlainButton = styled.button`
  display: flex;
  align-items: center;
  gap: ${({ $gap }) => $gap}px;
`

const InstanceForm = styled.div`
  display: flex;
  height: 66px;
  padding-right: 3px;
`

const FormFields = styled.div`
  display: grid;
  grid-template-columns: 63px 173px;
  grid-auto-rows: 26px;
  row-gap: 10px;
  align-items: center;
  padding: 2px 0 0 1px;
`

const FieldPair = styled.div`
  display: flex;
  gap: 3px;
  padding-right: 63px;
`

const TextBox = styled.input`
  width: 100%;
  min-width: 0;
  height: 26px;
  padding-left: 5px;
  border: 1px solid #d0d0d0;

  &:disabled {
    color: #a3a3a3;
  }
`

const InfoButton = styled.button`
  ${center}
  flex: none;
  width: 26px;
  border: 1px solid #dcdcdc;
`

const DescriptionLabel = styled.label`
  width: 98px;
  padding-top: 5px;
`

const DescriptionBox = styled.textarea`
  flex: 1;
  border: 1px solid #d6d6d6;
  resize: none;
`

const ServicesBar = styled.div`
  display: flex;
  flex: none;
  height: 26px;
  margin-bottom: 7px;
  line-height: 26px;

  h2 {
    width: 74px;
  }
`

const BarLine = styled.div`
  width: 1px;
  background: #b5bac3;
`

const IconButton = styled.button`
  ${center}
  flex: none;
  width: 38px;
`

const CollapseButton = styled(IconButton)`
  width: 26px;
`

const ServicesArea = styled.div`
  position: relative;
  flex: none;
  height: 54px;
  padding-right: 2px;
  border: 1px solid #cdcdcd;
`

const ServiceTable = styled.table`
  width: 100%;
  border-collapse: collapse;
  table-layout: fixed;

  th,
  td {
    padding: 1px 5px 0;
    border-right: 1px solid #cdcdcd;
    font-weight: 400;
    text-align: left;
    white-space: nowrap;
    overflow: hidden;
  }

  th {
    height: 24px;
  }

  td {
    height: 26px;
    background: #d3d3d3;
  }

  td:first-child {
    padding-left: 3px;
  }

  a {
    color: #0000f0;
  }
`

const Menu = styled.div`
  position: absolute;
  top: 42px;
  left: 602px;
  z-index: 2;
  width: 318px;
  padding: 1px;
  border: 1px solid #d6d6d6;
  background: #fff;
`

const MenuItem = styled.button.attrs({ role: 'menuitem' })`
  display: flex;
  align-items: center;
  gap: 17px;
  width: 100%;
  height: 27px;
  color: ${({ $dim }) => ($dim ? '#777' : '#000')};
`

const MenuCheck = styled.span`
  ${center}
  width: 27px;
  height: 27px;
  border: 1px solid ${({ $on }) => ($on ? '#2a9bd8' : 'transparent')};
  background: ${({ $on }) => ($on ? '#cbe6f5' : 'none')};
`

const MenuLine = styled.div`
  height: 1px;
  margin: 3px 0 4px 38px;
  background: #d6d6d6;
`

const mark = css`
  position: absolute;
  z-index: 3;
  border: 3px solid #fd3a38;
  pointer-events: none;
`

const SessionMark = styled.div`
  ${mark}
  top: 163px;
  left: 65px;
  width: 202px;
  height: 20px;
`

const RowMark = styled.div`
  ${mark}
  top: 22px;
  right: 4px;
  left: -2px;
  height: 38px;
`

const MenuMark = styled.div`
  ${mark}
  top: 158px;
  left: 594px;
  width: 279px;
  height: 35px;
`

const CalloutWrapper = styled.div`
  position: absolute;
  top: ${({ $y }) => $y}px;
  left: ${({ $x }) => $x}px;
  z-index: 4;
  display: flex;
  align-items: center;
  gap: 6px;
  color: #fff;
  font-family: ${CJK_FONT};
  white-space: nowrap;
`

const Badge = styled.span`
  width: 26px;
  height: 26px;
  border-radius: 50%;
  background: #fd3a38;
  font: 16px/25px 'Noto Sans', sans-serif;
  text-align: center;
`

const Bubble = styled.span`
  display: flex;
  align-items: center;
  min-width: ${({ $wide }) => ($wide ? 85 : 0)}px;
  height: 43px;
  padding: 0 17px 0 13px;
  background: rgba(0, 0, 0, 0.6);
  clip-path: polygon(5px 0, 100% 0, 100% 100%, 5px 100%, 5px 27px, 0 21px, 5px 15px);
  border-radius: 4px;
  font-size: 20px;
`

const ParamTabs = styled.div`
  display: flex;
  flex: none;
  align-items: flex-end;
  height: 28px;
  padding-left: 3px;
`

const ParamTab = styled.button`
  height: ${({ $active }) => ($active ? 29 : 26)}px;
  margin-bottom: ${({ $active }) => ($active ? -1 : 0)}px;
  padding: 0 10px;
  border: 1px solid #b0b0b0;
  border-bottom: 0;
  border-left-width: ${({ $active }) => ($active ? 1 : 0)}px;
  background: ${({ $active }) => ($active ? '#fff' : '#e5e5e5')};
  color: #444;
  z-index: ${({ $active }) => ($active ? 1 : 0)};
`

const ParamPanel = styled.div`
  display: flex;
  flex: 1;
  flex-direction: column;
  min-height: 0;
  padding: 0 7px 7px;
  border: 1px solid #a8a8a8;
`

const ParamBar = styled.div`
  display: flex;
  height: 28px;
  margin: 9px 0 2px;

  button {
    width: 42px;
  }

  button:nth-child(1) {
    width: 36px;
  }

  button:nth-child(2) {
    width: 32px;
    padding-right: 4px;
  }
`

const GridFrame = styled.div`
  display: flex;
  flex: 1;
  padding: 1px;
  border: 1px solid #d0d0d0;
`

const GridInner = styled.div`
  flex: 1;
  border: 1px solid #a0a0a0;
  font-family: ${UI_FONT};
`

const ParamTable = styled.table`
  width: 100%;
  border-collapse: collapse;
  table-layout: fixed;
  color: #444;

  th {
    height: 26px;
    padding: 0 5px;
    border-right: 1px solid #a0a0a0;
    border-bottom: 1px solid #a0a0a0;
    font-weight: 400;
    text-align: left;
    white-space: nowrap;
  }

  th:last-child {
    border-right: 0;
  }

  td {
    height: 22px;
    padding: 3px 5px 0;
  }

  tbody tr:nth-child(odd) {
    background: #f1f9fd;
  }
`

const Num = styled.td`
  && {
    padding-right: 2px;
  }
  text-align: right;
`

const Hint = styled.td`
  color: #9c9ca8;
  text-align: center;
`

const Aside = styled.aside`
  width: 474px;
`

const AsideTitle = styled.div`
  display: flex;
  align-items: center;
  gap: 4px;
  height: 55px;
  padding: 8px 7px 0 9px;
  border-bottom: 1px solid #e0e0e0;

  h2 {
    flex: 1;
  }
`

const General = styled.div`
  height: 230px;
  border-bottom: 1px solid #e0e0e0;
`

const SectionHead = styled.button`
  display: flex;
  align-items: center;
  gap: 10px;
  width: 100%;
  height: ${({ $open }) => ($open ? 50 : 59)}px;
  padding: ${({ $open }) => ($open ? '6px' : '0')} 9px 4px 10px;
  border-bottom: ${({ $open }) => ($open ? 0 : 1)}px solid #e0e0e0;
  color: #3c3c3c;
  font-weight: 700;

  svg:last-child {
    margin-left: auto;
  }
`

const PropRow = styled.div`
  display: flex;
  align-items: ${({ $top }) => ($top ? 'flex-start' : 'center')};
  min-height: 26px;
  margin-bottom: 6px;
  padding: 0 12px 0 32px;
  color: #444;

  label {
    flex: none;
    width: 141px;
    line-height: 26px;
  }

  & + & + & {
    margin-top: 13px;
  }

  & + & + & + & {
    margin-top: 0;
    padding-right: 9px;
  }

  svg {
    margin-left: 10px;
  }
`

const PropArea = styled.textarea`
  flex: 1;
  height: 62px;
  border: 1px solid #d0d0d0;
  resize: none;
`

const CheckBox = styled.input`
  appearance: none;
  width: 17px;
  height: 18px;
  border: 1px solid #c4c4c4;

  &::after {
    content: '';
    display: block;
    width: 11px;
    height: 6px;
    margin: 3px 0 0 2px;
    border: solid #999;
    border-width: 0 0 3px 3px;
    transform: rotate(-48deg);
  }
`

const OutputPane = styled.section`
  position: relative;
  display: flex;
  flex: none;
  flex-direction: column;
  height: 101px;
  margin: 5px 2px 0;
  border: 1px solid #a5a5a5;
  color: #333;
`

const OutputTitle = styled.div`
  display: flex;
  align-items: center;
  height: 44px;
  padding: 0 9px 2px 15px;

  button {
    width: 22px;
  }
`

const OutputBar = styled.div`
  display: flex;
  flex: none;
  height: 20px;
  padding-left: 4px;
  overflow: hidden;
`

const ToolGroup = styled.div`
  display: flex;
  height: 28px;
  background: ${({ $pressed }) => ($pressed ? '#d0d0d0' : 'none')};

  button {
    display: flex;
    justify-content: center;
    width: 32px;
    padding-top: 5px;
  }
`

const ToolLine = styled.div`
  width: 1px;
  height: 28px;
  margin: 0 4px 0 3px;
  background: #c0c0c0;
`

const ToolText = styled.span`
  padding: 5px 5px 0 6px;
`

const FilterBox = styled.input`
  width: 250px;
  height: 24px;
  margin: 3px 6px 0;
  padding-left: 4px;
  border: 1px solid #ababab;

  &::placeholder {
    color: #9a9a9a;
    opacity: 1;
  }
`

const OutputTabs = styled.div`
  display: flex;
  height: 29px;
  margin-top: 2px;
  padding-left: 4px;
`

const OutputTab = styled.button`
  padding: 0 14px;
  border-right: 1px solid #d6d6d6;
  color: ${({ $active }) => ($active ? '#b70032' : '#333')};
`

const Watermark = styled.div`
  position: absolute;
  right: 3px;
  bottom: -3px;
  color: #a6a6a6;
  font: 300 20px/24px ${CJK_FONT};
  text-shadow: 1px 1px #8a8a8a;
`
